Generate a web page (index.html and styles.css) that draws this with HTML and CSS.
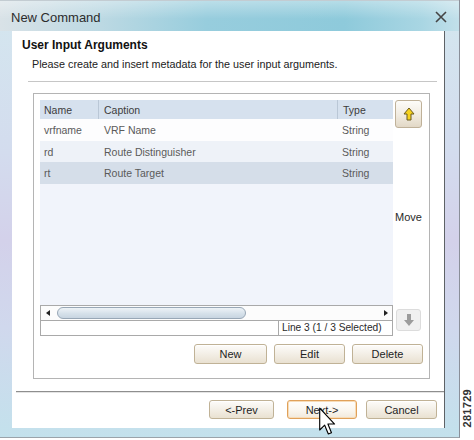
FILE: index.html
```html
<!DOCTYPE html>
<html>
<head>
<meta charset="utf-8">
<link rel="stylesheet" href="styles.css">
</head>
<body>
<div class="screen">
  <div class="window">
    <div class="titlebar">
      <span class="title">New Command</span>
      <svg class="close" width="12" height="12" viewBox="0 0 12 12"><path d="M1 1 L11 11 M11 1 L1 11" stroke="#454545" stroke-width="1.6" fill="none"/></svg>
    </div>
    <div class="frame-body">
      <div class="content">
        <div class="head">
          <h1 class="heading">User Input Arguments</h1>
          <p class="desc">Please create and insert metadata for the user input arguments.</p>
        </div>
        <div class="rule"></div>
        <div class="group">
          <div class="group-main">
            <div class="grid">
              <div class="grid-head">
                <div class="cell c-name">Name</div>
                <div class="cell c-cap">Caption</div>
                <div class="cell c-type">Type</div>
              </div>
              <div class="row r1">
                <div class="cell c-name">vrfname</div>
                <div class="cell c-cap">VRF Name</div>
                <div class="cell c-type">String</div>
              </div>
              <div class="row r2">
                <div class="cell c-name">rd</div>
                <div class="cell c-cap">Route Distinguisher</div>
                <div class="cell c-type">String</div>
              </div>
              <div class="row r3">
                <div class="cell c-name">rt</div>
                <div class="cell c-cap">Route Target</div>
                <div class="cell c-type">String</div>
              </div>
              <div class="empty"></div>
              <div class="hscroll">
                <span class="tri-left"></span>
                <span class="thumb"></span>
                <span class="spacer"></span>
                <span class="tri-right"></span>
              </div>
              <div class="status">
                <div class="status-box">Line 3 (1 / 3 Selected)</div>
              </div>
            </div>
            <div class="side">
              <div class="move-btn up">
                <svg width="12" height="14" viewBox="0 0 12 14"><path d="M6 1 L11 7 L8 7 L8 13 L4 13 L4 7 L1 7 Z" fill="#f6d21e" stroke="#6b5a1e" stroke-width="1" stroke-linejoin="round"/></svg>
              </div>
              <div class="move-label">Move</div>
              <div class="move-btn down">
                <svg width="12" height="14" viewBox="0 0 12 14"><path d="M4 1 L8 1 L8 7 L11 7 L6 13 L1 7 L4 7 Z" fill="#9c9c9c"/></svg>
              </div>
            </div>
          </div>
          <div class="actions">
            <button class="btn w73">New</button>
            <button class="btn w71">Edit</button>
            <button class="btn w71">Delete</button>
          </div>
        </div>
        <div class="sep"></div>
        <div class="nav">
          <button class="btn prev">&lt;-Prev</button>
          <button class="btn next hot">Next-&gt;</button>
          <button class="btn cancel">Cancel</button>
        </div>
      </div>
    </div>
    <svg class="cursor" width="17" height="29" viewBox="0 0 12 20"><path d="M0.5 0.5 L0.5 16 L4 12.6 L6.6 18.8 L8.8 17.9 L6.3 11.8 L11 11.8 Z" fill="#fff" stroke="#000" stroke-width="0.8" stroke-linejoin="round"/></svg>
  </div>
  <div class="fig"><span class="fig-num">281729</span></div>
</div>
</body>
</html>
```
FILE: styles.css
```css
* { box-sizing: border-box; }
html, body { margin: 0; padding: 0; background: #fff; }
body { font-family: "Liberation Sans", Arial, sans-serif; font-size: 11px; color: #333; }

.screen { display: flex; width: 474px; height: 440px; overflow: hidden; }

.window {
  position: relative;
  width: 460px;
  height: 438px;
  display: flex;
  flex-direction: column;
  border-right: 1px solid #8a8f99;
  border-bottom: 1px solid #9aa3aa;
  background: linear-gradient(to bottom, #d4e7ef 0%, #d3dcee 35%, #d3d1ea 55%, #d0d8ed 75%, #c3e1ec 100%);
}

.titlebar {
  height: 31px;
  flex: none;
  display: flex;
  align-items: center;
  justify-content: space-between;
  padding: 0 12px 0 11px;
  border-top: 1px solid #c3ccd2;
  background:
    linear-gradient(to bottom, rgba(255,255,255,0.35), rgba(255,255,255,0) 60%),
    linear-gradient(to right, #d9e2e7 0%, #bcd9e3 22%, #97cddd 45%, #8ecadb 75%, #a9d6e3 92%, #c2e0ea 100%);
}
.title { font-size: 13px; color: #2c2c2c; padding-top: 2px; }
.close { display: block; margin-top: 1px; }

.frame-body {
  flex: 1;
  padding: 0 14px 9px 12px;
  display: flex;
}

.content {
  width: 433px;
  height: 397px;
  background: #fff;
  border-right: 1px solid #5e6266;
  display: flex;
  flex-direction: column;
}

.head { padding: 7px 0 0 10px; }
.heading { margin: 0; font-size: 12px; font-weight: bold; line-height: 14px; color: #111; }
.desc { margin: 5px 0 0 10px; font-size: 10.8px; line-height: 14px; color: #222; }

.rule { margin: 10px 7px 0 16px; height: 1px; background: #c6c6c6; flex: none; }

.group {
  margin: 11px 0 0 21px;
  width: 397px;
  height: 286px;
  flex: none;
  border: 1px solid #b4b4b4;
  padding: 6px 6px 0 6px;
  display: flex;
  flex-direction: column;
}
.group-main { display: flex; height: 236px; }

.grid { width: 353px; display: flex; flex-direction: column; font-size: 10.5px; }
.grid-head, .row { display: grid; grid-template-columns: 58px 239px 56px; }
.grid-head { height: 19px; background: #d6e1ee; color: #3c3c3c; }
.grid-head .c-cap, .grid-head .c-type { border-left: 1px solid #bac7d6; }
.row { color: #5a5a5a; }
.r1 { height: 22px; background: #fdfdfe; }
.r2 { height: 21px; background: #eef2f8; }
.r3 { height: 22px; background: #d5dee9; }
.cell { display: flex; align-items: center; padding-left: 5px; white-space: nowrap; }
.c-name { padding-left: 4px; }
.row .c-cap { padding-left: 6px; }
.empty { flex: 1; background: #f1f4fb; }

.hscroll {
  height: 16px;
  flex: none;
  border: 1px solid #a9a9a9;
  background: #fcfcfc;
  display: flex;
  align-items: center;
  padding: 0 4px 0 5px;
}
.tri-left { width: 0; height: 0; border-top: 3px solid transparent; border-bottom: 3px solid transparent; border-right: 4px solid #222; }
.thumb {
  margin-left: 7px;
  width: 189px;
  height: 12px;
  border: 1px solid #98a7b6;
  border-radius: 6px;
  background: linear-gradient(to bottom, #eef3f7, #d6e1ea 55%, #c8d5e1);
}
.spacer { flex: 1; }
.tri-right { width: 0; height: 0; border-top: 3px solid transparent; border-bottom: 3px solid transparent; border-left: 4px solid #222; }

.status {
  height: 15px;
  flex: none;
  border: 1px solid #a9a9a9;
  border-top: none;
  display: flex;
  justify-content: flex-end;
  background: #fff;
}
.status-box {
  width: 114px;
  border-left: 1px solid #a9a9a9;
  padding-left: 3px;
  line-height: 14px;
  font-size: 10.2px;
  color: #2a2a2a;
  white-space: nowrap;
}

.side { width: 29px; display: flex; flex-direction: column; align-items: flex-start; }
.move-btn {
  display: flex; align-items: center; justify-content: center;
  border-radius: 3px;
}
.move-btn.up {
  margin-left: 2px;
  width: 27px; height: 28px;
  border: 1px solid #bfb199;
  background: linear-gradient(to bottom, #fdfcf9, #f1ebe0 55%, #e2d8c6);
}
.move-label { margin-top: 82px; line-height: 14px; font-size: 11px; color: #2a2a2a; margin-left: 2px; }
.move-btn.down {
  margin-top: 85px;
  margin-left: 3px;
  width: 25px; height: 22px;
  border: 1px solid #dcdcdc;
  background: #f0f0f0;
}

.actions { margin-top: 8px; display: flex; justify-content: flex-end; gap: 7px; }

.btn {
  height: 20px;
  padding: 0;
  font-family: "Liberation Sans", Arial, sans-serif;
  font-size: 11px;
  color: #1e1e1e;
  border: 1px solid #c0b296;
  border-radius: 3px;
  background: linear-gradient(to bottom, #fdfcfa 0%, #f4f0e8 45%, #e9e1d1 100%);
  box-shadow: inset 0 1px 0 #fff;
}
.w73 { width: 73px; }
.w71 { width: 71px; }

.sep { margin: 12px 0 0 4px; height: 2px; border-top: 1px solid #8e8e8e; border-bottom: 1px solid #e4e4e4; flex: none; }

.nav { margin-top: 7px; display: flex; justify-content: flex-end; padding-right: 7px; }
.nav .btn { height: 19px; }
.prev { width: 65px; }
.next { width: 70px; margin-left: 13px; }
.cancel { width: 71px; margin-left: 9px; }
.btn.hot {
  border-color: #e0a15a;
  box-shadow: inset 0 0 0 1px #f7dcb8;
  background: linear-gradient(to bottom, #fffefc, #faf6ef 55%, #f1e9dc);
}

.cursor { position: absolute; left: 319px; top: 407px; }

.fig { width: 14px; display: flex; flex-direction: column; justify-content: flex-end; padding: 0 0 12px 2px; }
.fig-num {
  writing-mode: vertical-rl;
  transform: rotate(180deg);
  font-size: 11px;
  font-weight: bold;
  color: #333;
  line-height: 11px;
  letter-spacing: 0.3px;
}
```
